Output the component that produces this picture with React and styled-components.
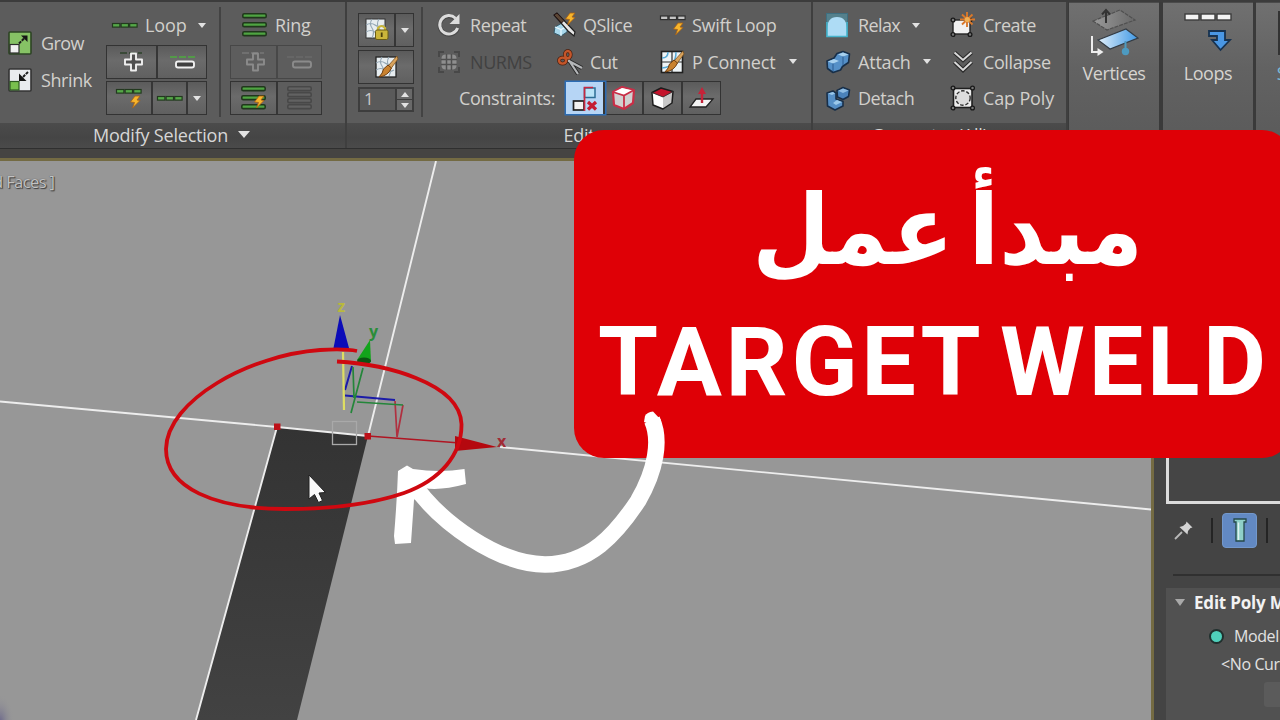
import React from "react";
import styled, { createGlobalStyle } from "styled-components";

const Global = createGlobalStyle`
  * { box-sizing: border-box; }
  body { margin: 0; background: #444; font-family: "Open Sans", "Noto Sans", sans-serif; overflow: hidden; }
  svg { display: block; flex: none; overflow: visible; }
`;

const Screen = styled.div`
  position: relative;
  width: 1280px;
  height: 720px;
  overflow: hidden;
  background: #444;
  display: flex;
  flex-direction: column;
`;

/* ---------- ribbon ---------- */
const Ribbon = styled.header`
  height: 149px;
  flex: none;
  display: flex;
  background: #3a3a3a;
  border-top: 2px solid #3c3c3c;
  border-bottom: 1px solid #2f2f2f;
`;
const Panel = styled.section`
  width: ${(p) => p.$w}px;
  flex: none;
  display: flex;
  flex-direction: column;
  background: #5c5c5c;
  border-right: 2px solid #3f3f3f;
`;
const PanelBody = styled.div`
  height: 121px;
  display: flex;
  padding: 5px 0 0 ${(p) => p.$left}px;
`;
const PanelTitle = styled.div`
  height: 25px;
  display: flex;
  align-items: center;
  justify-content: center;
  gap: 10px;
  padding: 0 ${(p) => p.$shift || 0}px 2px 0;
  background: linear-gradient(#4b4b4b, #454545 60%, #4a4a4a);
  color: #d6d6d6;
  font-size: 18px;
  letter-spacing: -0.2px;
  line-height: 22px;
  white-space: nowrap;
`;
const Column = styled.div`
  width: ${(p) => p.$w}px;
  flex: none;
  padding-top: ${(p) => p.$top || 0}px;
`;
const StackColumn = styled(Column)`
  display: flex;
  flex-direction: column;
  align-items: flex-start;
  gap: 3px;
`;
const Row = styled.div`
  height: 36.5px;
  display: flex;
  align-items: center;
  padding-left: ${(p) => p.$in || 0}px;
`;
const Label = styled.span`
  margin-left: ${(p) => (p.$gap === undefined ? 9 : p.$gap)}px;
  color: ${(p) => (p.$off ? "#414141" : "#d2d0cc")};
  font-size: 18px;
  line-height: 24px;
  letter-spacing: ${(p) => (p.$ls === undefined ? -0.4 : p.$ls)}px;
  white-space: nowrap;
`;
const Divider = styled.div`
  width: 2px;
  height: 110px;
  flex: none;
  margin-right: ${(p) => p.$r}px;
  background: #434343;
`;
const Caret = styled.i`
  width: 0;
  height: 0;
  flex: none;
  margin-left: ${(p) => p.$gap || 0}px;
  border: ${(p) => p.$s || 4}px solid transparent;
  border-top: ${(p) => (p.$s || 4) + 1}px solid #e2e2e2;
  border-bottom: 0;
`;
const ButtonGroup = styled.div`
  display: flex;
  border: 1px solid ${(p) => (p.$off ? "#474747" : "#333")};
  height: 34px;
`;
const ToolButton = styled.button`
  width: ${(p) => p.$w}px;
  flex: none;
  padding: 0;
  border: 0;
  border-right: ${(p) => (p.$last ? 0 : 2)}px solid ${(p) => (p.$off ? "#484848" : "#363636")};
  display: flex;
  align-items: center;
  justify-content: center;
  background: ${(p) =>
    p.$on ? "#b6d5f5" : p.$off ? "#5d5d5d" : "linear-gradient(#5b5b5b, #6b6b6b 45%, #606060)"};
  box-shadow: ${(p) => (p.$on ? "0 0 0 1.500px #2c6cb3" : "none")};
  z-index: ${(p) => (p.$on ? 1 : 0)};
`;
const Spinner = styled.div`
  width: 56px;
  height: 25px;
  display: flex;
  border: 2px solid #3d3d3d;
  background: #5a5a5a;
  color: #c9c9c9;
  font-size: 17px;
  line-height: 20px;
  padding-left: 4px;
  justify-content: space-between;
`;
const SpinArrows = styled.div`
  width: 17px;
  display: flex;
  flex-direction: column;
  border-left: 2px solid #3d3d3d;
`;
const Spin = styled.div`
  flex: 1;
  display: flex;
  align-items: center;
  justify-content: center;
  background: #696969;
  & + & { border-top: 1px solid #3d3d3d; }
`;
const CaretUp = styled.i`
  border: 4px solid transparent;
  border-bottom: 5px solid #e2e2e2;
  border-top: 0;
`;
const BigButton = styled.div`
  width: 90px;
  height: 147px;
  flex: none;
  margin-left: ${(p) => p.$gap}px;
  padding-top: 5px;
  display: flex;
  flex-direction: column;
  align-items: center;
  background: linear-gradient(#707070, #626262 45%, #5a5a5a);
  border-top: 1px solid #4b4b4b;
  color: ${(p) => p.$c || "#d6d4d0"};
  font-size: 18px;
  line-height: 24px;
  letter-spacing: -0.45px;
  & > svg { margin-bottom: 4px; }
`;

/* ---------- workspace ---------- */
const Gutter = styled.div`
  height: 9px;
  flex: none;
  background: #454442;
`;
const Work = styled.main`
  flex: 1;
  display: flex;
  min-height: 0;
`;
const Viewport = styled.div`
  position: relative;
  width: 1154px;
  flex: none;
  border-top: 3px solid #746b43;
  border-right: 3px solid #746b43;
  background: #979797;
  overflow: hidden;
`;
const ViewTag = styled.div`
  margin: 10px 0 0 -7px;
  font: 16.500px/22px "Open Sans", sans-serif;
  letter-spacing: -0.6px;
  color: #c2c2c2;
  text-shadow: 1px 1px 1px #3c3c3c, 0 0 1px #444;
  white-space: pre;
`;
const Scene = styled.svg`
  position: absolute;
  left: 0;
  top: -161px;
`;
const Side = styled.aside`
  flex: 1;
  min-width: 0;
  padding-left: 12px;
  background: #444;
  overflow: hidden;
`;
const StackBox = styled.div`
  height: 346px;
  width: 160px;
  border: 3px solid #dcdcdc;
  border-right: 0;
  background: #454545;
`;
const StackTools = styled.div`
  display: flex;
  align-items: center;
  width: 160px;
  height: 36px;
  margin-top: 8px;
  padding-left: 8px;
`;
const Bar = styled.div`
  width: 2px;
  height: 25px;
  flex: none;
  margin: 0 ${(p) => p.$r}px 0 ${(p) => p.$l}px;
  background: #242424;
`;
const StackButton = styled.div`
  width: 35px;
  height: 35px;
  flex: none;
  display: flex;
  align-items: center;
  justify-content: center;
  border-radius: 4px;
  background: #6289c3;
  border: 1px solid #7398cb;
`;
const Rule = styled.div`
  height: 2px;
  width: 140px;
  margin: 26px 0 12px 7px;
  background: #303030;
`;
const Rollout = styled.div`
  width: 160px;
  height: 140px;
  background: #515151;
  color: #e2e2e2;
  font-size: 16px;
  letter-spacing: -0.4px;
  white-space: nowrap;
`;
const RollTitle = styled.div`
  height: 30px;
  display: flex;
  align-items: center;
  padding: 0 0 2px 9px;
  gap: 9px;
  font-weight: 700;
  font-size: 17px;
  letter-spacing: -0.2px;
  color: #f2f2f2;
`;
const RollCaret = styled(Caret)`
  border-top-color: #a9a9a9;
  border-top-width: 7px;
  border-left-width: 5px;
  border-right-width: 5px;
`;
const RadioRow = styled.div`
  height: 36px;
  display: flex;
  align-items: center;
  padding-left: 43px;
  gap: 10px;
`;
const Radio = styled.i`
  width: 15px;
  height: 15px;
  border-radius: 50%;
  background: #4fd0bb;
  border: 2px solid #20302e;
`;
const RollText = styled.div`
  padding-left: 55px;
  line-height: 20px;
`;
const RollField = styled.div`
  margin: 8px 0 0 98px;
  height: 25px;
  border-radius: 3px;
  background: #5b5b5b;
`;

/* ---------- overlay ---------- */
const Card = styled.div`
  position: absolute;
  left: 574px;
  top: 130px;
  width: 718px;
  height: 328px;
  border-radius: 30px;
  background: #df0006;
  color: #fff;
  white-space: nowrap;
`;
const Arabic = styled.div`
  height: 190px;
  padding: 30px 154px 0 0;
  direction: rtl;
  font: 700 98px/140px "DejaVu Sans", sans-serif;
  word-spacing: -18px;
  transform: translateX(-8px) scaleX(0.915);
  transform-origin: 100% 0;
`;
const Headline = styled.div`
  padding-left: 24px;
  font: 700 97px/84px Roboto, "Liberation Sans", sans-serif;
  letter-spacing: 3.7px;
  word-spacing: -9.500px;
`;
const Marks = styled.svg`
  position: absolute;
  left: 0;
  top: 0;
`;

/* ---------- icons ---------- */
const Dashes = ({ x = 0, y = 0, c = "#55a848", d = "#23391f" }) => (
  <g>
    {[0, 8.6, 17.2].map((o) => (
      <rect key={o} x={x + o + 0.5} y={y + 0.5} width="7.4" height="3.6" fill={c} stroke={d} strokeWidth="1.2" />
    ))}
  </g>
);
const Bars = ({ c = "#4fa542", d = "#20371c", y = [0, 9, 18] }) => (
  <g>
    {y.map((o) => (
      <rect key={o} x="0.8" y={o + 0.8} width="23.4" height="3.8" rx="1.4" fill={c} stroke={d} strokeWidth="1.6" />
    ))}
  </g>
);
const Svg = ({ w = 24, h = 24, children }) => (
  <svg width={w} height={h} viewBox={`0 0 ${w} ${h}`} fill="none">
    {children}
  </svg>
);
const Bolt = ({ x, y }) => (
  <path
    transform={`translate(${x} ${y})`}
    d="M5 0 L10 0 L7 4 L10 4.5 L2.5 12 L4.5 6.5 L0.5 6Z"
    fill="#f6b52c"
    stroke="#a85f14"
    strokeWidth="0.8"
  />
);
const GrowIcon = () => (
  <Svg>
    <rect x="1" y="1" width="22" height="22" rx="1" fill="#86c265" stroke="#2d4424" strokeWidth="1.6" />
    <rect x="2" y="13.5" width="9" height="8.5" fill="#f0f0f0" stroke="#2c2c2c" strokeWidth="1.2" />
    <path d="M11 12.5 L17.5 6" stroke="#1c1c1c" strokeWidth="2" strokeDasharray="3 1" />
    <path d="M13 4.5 H19.5 V11Z" fill="#151515" />
  </Svg>
);
const ShrinkIcon = () => (
  <Svg>
    <rect x="1" y="1" width="22" height="22" rx="1" fill="#e9ebee" stroke="#333" strokeWidth="1.6" />
    <rect x="2" y="13.5" width="9" height="8.5" fill="#79c04e" stroke="#2d5a21" strokeWidth="1.2" />
    <path d="M20 4 L14 10" stroke="#1c1c1c" strokeWidth="2" strokeDasharray="3 1" />
    <path d="M11 5.5 V13 H18.5Z" fill="#151515" />
  </Svg>
);
const plusPath = "M7 1 H12 V7 H18 V12 H12 V18 H7 V12 H1 V7 H7Z";
const PlusIcon = ({ off }) => (
  <Svg w={25} h={22}>
    <path d="M1 2 H23" stroke={off ? "#707070" : "#3a4a38"} strokeWidth="2" strokeDasharray="7 2" />
    <path transform="translate(5 1.5)" d={plusPath} fill={off ? "#606060" : "#505050"} stroke={off ? "#8b8b8b" : "#f0f0f0"} strokeWidth="1.9" strokeLinejoin="round" />
  </Svg>
);
const MinusIcon = ({ off }) => (
  <Svg w={25} h={22}>
    <path d="M0 6 H25" stroke={off ? "#666" : "#539a48"} strokeWidth="1.8" strokeDasharray="7 2" />
    <rect x="6" y="10.5" width="18" height="6" rx="2" fill={off ? "#606060" : "#404040"} stroke={off ? "#8b8b8b" : "#f0f0f0"} strokeWidth="1.9" />
  </Svg>
);
const mesh = (
  <path d="M2 8 Q7 5 11 8 T20 8 M2 15 Q7 12 11 15 T20 15 M8 2 Q5 7 8 11 T8 21 M15 2 Q12 7 15 11 T15 21" stroke="#93a6b3" strokeWidth="1.1" />
);
const MeshLock = () => (
  <Svg w={26} h={26}>
    <rect x="2" y="2" width="19" height="19" fill="#e7edf0" stroke="#333" />
    {mesh}
    <path d="M14 14 V11 Q17.5 7 21 11 V14" stroke="#c9b63a" strokeWidth="2.2" />
    <rect x="11.5" y="13" width="12.5" height="9.5" rx="1.5" fill="#cbb53a" stroke="#6a5d15" />
    <path d="M17.7 15.5 V20" stroke="#4b410d" strokeWidth="1.8" />
  </Svg>
);
const Brush = () => (
  <>
    <path d="M23 1 L14 11 L17 13.5 L24 4Z" fill="#d9a35c" stroke="#78501f" strokeWidth="0.8" />
    <path d="M14 10 L17.5 13 Q14 21 5 22 Q9 18 9.500 14Z" fill="#c9822f" stroke="#6e3e10" />
  </>
);
const MeshBrush = () => (
  <Svg>
    <rect x="2" y="2" width="20" height="20" fill="#e7edf0" stroke="#222" strokeWidth="1.3" />
    {mesh}
    <Brush />
  </Svg>
);
const RepeatIcon = () => (
  <Svg>
    <path d="M18.500 5.800 A9.2 9.2 0 1 0 20.6 15.5" stroke="#333" strokeWidth="4.400" opacity="0.5" />
    <path d="M18.500 5.300 A9.2 9.2 0 1 0 20.6 15" stroke="#dcdcdc" strokeWidth="3" />
    <path d="M22.5 1 V11 H12.5Z" fill="#dcdcdc" />
  </Svg>
);
const NurmsIcon = () => (
  <Svg>
    <path d="M2 7 V2 H7 M17 2 H22 V7 M22 17 V22 H17 M7 22 H2 V17" stroke="#484848" strokeWidth="2" />
    <rect x="4.500" y="4.500" width="15" height="15" rx="4" fill="#8e8e8e" />
    <path d="M9.5 4 V20 M14.5 4 V20 M4 9.5 H20 M4 14.5 H20" stroke="#505050" strokeWidth="1.5" />
  </Svg>
);
const QSliceIcon = () => (
  <Svg w={25} h={26}>
    <path d="M3 15 L10 11 L16 14 L15 20 L9 24 L2 21Z" fill="#a9d8ec" stroke="#35596a" />
    <path d="M3 15 L9 17.5 L16 14 M9 17.5 V24" stroke="#e9f8ff" strokeWidth="1.2" />
    <path d="M2 3 L5 1 L23 20 L22 24 L16 19Z" fill="#e6e6e6" stroke="#222" strokeWidth="1.2" />
    <path d="M2 3 L5 1 L12 8.5 L9.5 11Z" fill="#5b4635" stroke="#211" />
    <Bolt x={13} y={1} />
  </Svg>
);
const CutIcon = () => (
  <Svg w={26}>
    <path d="M9 10 L24 18 M10 9 L20 24" stroke="#282828" strokeWidth="4" />
    <path d="M9 10 L24 18 M10 9 L20 24" stroke="#b4b6b8" strokeWidth="2.2" />
    <ellipse cx="4.6" cy="10.6" rx="3.6" ry="3" stroke="#4a2010" strokeWidth="3.800" />
    <ellipse cx="9.8" cy="4.6" rx="2.9" ry="3.6" stroke="#4a2010" strokeWidth="3.800" />
    <ellipse cx="4.6" cy="10.6" rx="3.6" ry="3" stroke="#c4562a" strokeWidth="2.4" />
    <ellipse cx="9.8" cy="4.6" rx="2.9" ry="3.6" stroke="#c4562a" strokeWidth="2.4" />
  </Svg>
);
const SwiftIcon = () => (
  <Svg w={25} h={24}>
    <Dashes y={2.5} c="#c5c5c5" d="#2f2f2f" />
    <Bolt x={13} y={10} />
  </Svg>
);
const PConnectIcon = () => (
  <Svg>
    <rect x="1.5" y="1.5" width="21" height="21" fill="#eef4f7" stroke="#1f1f1f" strokeWidth="1.6" />
    <path d="M12 2 V22 M2 12 H22" stroke="#2d2d2d" strokeWidth="1.2" />
    <path d="M2 8 Q8 8 8 2 M2 18 Q16 17 16 2" stroke="#58a9d4" strokeWidth="1.5" />
    <Brush />
  </Svg>
);
const NoneIcon = () => (
  <Svg w={26} h={28}>
    <rect x="12.500" y="4" width="10.500" height="9.500" fill="#b9e3f7" stroke="#2d6d94" strokeWidth="1.5" />
    <rect x="1.5" y="17" width="10.5" height="9" fill="#f2f2f2" stroke="#202020" strokeWidth="1.7" />
    <path d="M21 3.500 H12.500 V27" stroke="#c62841" strokeWidth="1.7" />
    <path d="M16 18 L24 25.500 M24 18 L16 25.500" stroke="#c41c33" strokeWidth="3.2" />
  </Svg>
);
const cube = ["M2 7 L11 2 L23 5 L22 18 L13 24 L3 20Z", "M2 7 L13 10.5 L23 5 M13 10.5 V24"];
const EdgeIcon = () => (
  <Svg w={25} h={26}>
    <path d={cube[0]} fill="#d0d0d0" stroke="#c92e47" strokeWidth="2.2" strokeLinejoin="round" />
    <path d="M3 7 L11 3 L22 5.5 L13 10Z" fill="#fff" />
    <path d={cube[1]} stroke="#c92e47" strokeWidth="1.8" />
  </Svg>
);
const FaceIcon = () => (
  <Svg w={25} h={26}>
    <path d="M2 8 L13 12 V24 L3 20Z" fill="#fff" />
    <path d="M23 7 L13 12 V24 L22 18Z" fill="#c9c9c9" />
    <path d="M2 7.5 L11 3 L23 6.5 L13 12Z" fill="#c4142c" />
    <path d="M2 7.5 L11 3 L23 6.5 L22 18 L13 24 L3 20Z" stroke="#1c1c1c" strokeWidth="1.5" strokeLinejoin="round" />
    <path d="M2 7.5 L13 12 L23 6.5" stroke="#303030" strokeWidth="0.8" />
  </Svg>
);
const NormalIcon = () => (
  <Svg w={25} h={26}>
    <path d="M7 14 H24 L17 22 H1Z" fill="#f4f4f4" stroke="#222" strokeWidth="1.3" />
    <path d="M13 18 V7" stroke="#c52339" strokeWidth="2.4" />
    <path d="M13 2 L17 9 H9Z" fill="#c52339" />
  </Svg>
);
const RelaxIcon = () => (
  <Svg w={24} h={26}>
    <rect x="1.5" y="1.5" width="21" height="23" fill="#54808c" stroke="#3e6f80" />
    <path d="M2 24.5 V18 Q2 5 12 5 T22 18 V24.5Z" fill="#aedcf5" />
    <path d="M2 10 V24.5 H22 V10" stroke="#46b4cc" strokeWidth="1.6" />
  </Svg>
);
const AttachIcon = () => (
  <Svg w={26} h={24}>
    <path d="M2 11 L9 8 L12 3.5 L18 1.5 L24.5 4 L23.5 12.5 L17.5 16.5 L15.5 20 L8 22.5 L2.5 18.5Z" fill="#5590c8" stroke="#182f49" strokeWidth="1.6" strokeLinejoin="round" />
    <path d="M2.8 11.5 L9 9 L14 11 L8 13.5Z M13 4.5 L18 2.5 L23.5 4.5 L18 6.5Z" fill="#a8d1ef" />
    <path d="M8 13.5 V21 M18 6.5 V15" stroke="#2d5d92" />
  </Svg>
);
const DetachIcon = () => (
  <Svg w={26} h={25}>
    <path d="M2 7 L8 5 L11 7 V13 L18 15.5 V20 L10 24 L2.5 20Z" fill="#568fc6" stroke="#182f49" strokeWidth="1.6" strokeLinejoin="round" />
    <path d="M3 7.5 L8 6 L10 7.5 L7 9Z M8 17 L12 14 L17 16 L11 19Z" fill="#9bc8ea" />
    <path d="M12 4.5 L18 1.5 L24.5 4 L23.5 10.5 L18 13.5 L12.5 11Z" fill="#4a82ba" stroke="#182f49" strokeWidth="1.6" strokeLinejoin="round" />
    <path d="M13 4.8 L18 2.5 L23.5 4.5 L18 7Z" fill="#8ebce2" />
  </Svg>
);
const corners = (a, b, c, d) => [[a, b], [c, b], [a, d], [c, d]].map(([x, y]) => (
  <circle key={x + "," + y} cx={x} cy={y} r="1.9" fill="#777" stroke="#181818" strokeWidth="1.3" />
));
const CreateIcon = () => (
  <Svg w={26} h={26}>
    <rect x="3" y="8" width="17" height="14" fill="#f1f1f1" stroke="#242424" strokeWidth="1.4" />
    {corners(3, 8, 20, 22.5)}
    <path d="M17 0 V15 M10 7.5 H25 M12 2.5 L22.5 12.5 M22.5 2.5 L12 12.5" stroke="#d9782a" strokeWidth="1.9" />
    <circle cx="17.3" cy="7.5" r="2.600" fill="#f0b055" />
  </Svg>
);
const CollapseIcon = () => (
  <Svg w={26} h={24}>
    <path d="M4.5 2.5 L13 10 L21.5 2.5 M4.5 12 L13 20 L21.5 12" stroke="#292929" strokeWidth="4.2" />
    <path d="M4.5 2.5 L13 10 L21.5 2.5 M4.5 12 L13 20 L21.5 12" stroke="#d8d8d8" strokeWidth="2" />
  </Svg>
);
const CapIcon = () => (
  <Svg w={26} h={26}>
    <rect x="3.5" y="3.5" width="18.5" height="19" fill="#ededed" stroke="#1f1f1f" strokeWidth="1.6" />
    <circle cx="13" cy="13" r="7.2" fill="#ddd" stroke="#303030" strokeWidth="1.4" strokeDasharray="3.5 1.8" />
    {corners(3, 3, 22.5, 23)}
  </Svg>
);
const VerticesIcon = () => (
  <svg width="50" height="49" viewBox="0 0 50 49" fill="none">
    <defs>
      <linearGradient id="va" x1="0" x2="1"><stop stopColor="#9a9a9a" /><stop offset="1" stopColor="#686868" /></linearGradient>
      <linearGradient id="vb" x1="0" x2="1"><stop stopColor="#e2f0fb" /><stop offset="1" stopColor="#3f98e4" /></linearGradient>
    </defs>
    <path d="M4 13 L31 2 L46 12 L18 22Z" fill="url(#va)" stroke="#505050" strokeWidth="1.2" strokeDasharray="4 1" />
    <path d="M17 15 V4 M13 6.5 L17 2 L21 6.5" stroke="#333" strokeWidth="2" />
    <path d="M9 32 L37 21 L49 30 L21 41Z" fill="url(#vb)" stroke="#343c44" strokeWidth="1.2" />
    <path d="M3 28 V44 H10" stroke="#eee" strokeWidth="2" />
    <path d="M8.500 40 L14.500 44 L8.500 48Z" fill="#eee" />
    <path d="M36.500 33 V42" stroke="#4d9ac0" strokeWidth="2" />
    <circle cx="36.500" cy="43.500" r="3.700" fill="#4d9ac0" />
  </svg>
);
const LoopsIcon = () => (
  <svg width="48" height="49" viewBox="0 0 48 49" fill="none">
    {[1, 17, 33].map((x) => <rect key={x} x={x} y="6" width="14" height="6" fill="#f4f4f4" stroke="#3c3c3c" strokeWidth="1.4" />)}
    <path d="M25 23 H41 V32 H46 L36.500 42 L28 32 H33 V28 H25Z" fill="#4a97e4" stroke="#173250" strokeWidth="1.800" />
  </svg>
);
const BoxIcon = () => (
  <svg width="46" height="49" viewBox="0 0 46 49"><rect x="1" y="4" width="44" height="42" fill="#4b4b4b" stroke="#333" strokeWidth="2" /></svg>
);
const PinIcon = () => (
  <Svg w={20} h={20}>
    <path d="M1 19 L8 12" stroke="#b9b9b9" strokeWidth="1.800" />
    <path d="M12.500 1.500 L18.500 7.500 L16.500 8 L14 11 L13.500 14.500 L5.500 7 L9 6 L12 3.500Z" fill="#d3d3d3" />
  </Svg>
);
const TubeIcon = () => (
  <Svg w={14} h={24}>
    <path d="M1 1 H13 V4 H11 V23 H3 V4 H1Z" fill="#8fd0c8" stroke="#26484a" strokeWidth="1.300" />
    <path d="M5.500 4.500 V22" stroke="#dff3f0" strokeWidth="1.500" />
  </Svg>
);

const SceneDrawing = () => (
  <Scene width="1151" height="720" viewBox="0 0 1151 720" fill="none">
    <defs>
      <linearGradient id="strip" x1="0" y1="427" x2="0" y2="720" gradientUnits="userSpaceOnUse">
        <stop stopColor="#333" /><stop offset="1" stopColor="#424242" />
      </linearGradient>
      <radialGradient id="glow"><stop stopColor="#5f5a88" /><stop offset="1" stopColor="#979797" stopOpacity="0" /></radialGradient>
    </defs>
    <ellipse cx="0" cy="722" rx="14" ry="28" fill="url(#glow)" opacity="0.8" />
    <path d="M277 427 L368 436 L297 720 H196Z" fill="url(#strip)" />
    <path d="M0 401.500 L277 427 L368 436 M500 447 L1151 509.500 M436 161 L368 436 M277 427 L196 720" stroke="#ededed" strokeWidth="1.900" />
    <rect x="332.500" y="421.500" width="24" height="23" stroke="#a9a9a9" strokeWidth="1.300" />
    <path d="M368 436 L460 443" stroke="#b01522" strokeWidth="1.700" />
    <path d="M455 436 L497 447 L455 451Z" fill="#b5080f" />
    <path d="M395 401 L397 437 L403 405" stroke="#b03040" strokeWidth="1.700" />
    <path d="M345 390 L352 366 M345 395.500 L395 400" stroke="#1b1ba8" strokeWidth="2" />
    <path d="M351 413 L363 368 M353 367 L354 398 M357 402 L403 405" stroke="#24863a" strokeWidth="1.700" />
    <path d="M343 352 L344 410" stroke="#dede62" strokeWidth="2.200" />
    <path d="M340 315 L349 348 Q341 354 333.500 348Z" fill="#0b0bb8" />
    <path d="M370 340 L371 362 L357 360Z" fill="#12a41b" />
    <ellipse cx="364" cy="361" rx="7" ry="3.500" fill="#0b5512" />
    <g fontFamily="Open Sans, sans-serif" fontWeight="700" fontSize="16">
      <text x="337.500" y="311.500" fill="#b9b93c">z</text>
      <text x="369" y="337" fill="#2b8d39">y</text>
      <text x="497" y="447" fill="#a12b35">x</text>
    </g>
    <path d="M274 423.500 h6.500 v6.500 h-6.500Z M364.500 433 h6.500 v6.500 h-6.500Z" fill="#bd1018" />
    <path d="M309 475 V499 L314.500 494.500 L318.500 502.500 L322.500 500.500 L319 493 L325.500 492.500Z" fill="#fafafa" stroke="#202020" strokeWidth="1" />
  </Scene>
);

export default function App() {
  return (
    <Screen>
      <Global />
      <Ribbon>
        <Panel $w={347}>
          <PanelBody $left={8}>
            <Column $w={98} $top={18}>
              <Row><GrowIcon /><Label $ls={-0.6}>Grow</Label></Row>
              <Row><ShrinkIcon /><Label>Shrink</Label></Row>
            </Column>
            <Column $w={113}>
              <Row $in={6}>
                <Svg w={25} h={5}><Dashes /></Svg><Label $gap={8} $ls={-0.1}>Loop</Label><Caret $gap={11} />
              </Row>
              <Row>
                <ButtonGroup>
                  <ToolButton $w={51}><PlusIcon /></ToolButton>
                  <ToolButton $w={48} $last><MinusIcon /></ToolButton>
                </ButtonGroup>
              </Row>
              <Row>
                <ButtonGroup>
                  <ToolButton $w={46}><Svg w={26}><Dashes y={3} /><Bolt x={14} y={10} /></Svg></ToolButton>
                  <ToolButton $w={35}><Svg w={25} h={5}><Dashes /></Svg></ToolButton>
                  <ToolButton $w={18} $last><Caret /></ToolButton>
                </ButtonGroup>
              </Row>
            </Column>
            <Divider $r={9} />
            <Column $w={94}>
              <Row $in={12}>
                <Svg w={25} h={24}><Bars /></Svg><Label $gap={8} $ls={-0.2}>Ring</Label>
              </Row>
              <Row>
                <ButtonGroup $off>
                  <ToolButton $w={47} $off><PlusIcon off /></ToolButton>
                  <ToolButton $w={43} $off $last><MinusIcon off /></ToolButton>
                </ButtonGroup>
              </Row>
              <Row>
                <ButtonGroup>
                  <ToolButton $w={47}><Svg w={25} h={24}><Bars /><Bolt x={13} y={10} /></Svg></ToolButton>
                  <ToolButton $w={43} $off $last><Svg w={25} h={24}><Bars c="#626262" d="#484848" y={[0, 6, 12, 18]} /></Svg></ToolButton>
                </ButtonGroup>
              </Row>
            </Column>
          </PanelBody>
          <PanelTitle $shift={2}>Modify Selection<Caret $s={6} /></PanelTitle>
        </Panel>

        <Panel $w={466}>
          <PanelBody $left={11}>
            <StackColumn $w={63} $top={6}>
              <ButtonGroup>
                <ToolButton $w={37}><MeshLock /></ToolButton>
                <ToolButton $w={17} $last><Caret /></ToolButton>
              </ButtonGroup>
              <ButtonGroup><ToolButton $w={54} $last><MeshBrush /></ToolButton></ButtonGroup>
              <Spinner>1
                <SpinArrows><Spin><CaretUp /></Spin><Spin><Caret /></Spin></SpinArrows>
              </Spinner>
            </StackColumn>
            <Divider $r={14} />
            <div>
              <Row>
                <Column $w={115}><Row><RepeatIcon /><Label>Repeat</Label></Row></Column>
                <Column $w={108}><Row><QSliceIcon /><Label $gap={6}>QSlice</Label></Row></Column>
                <SwiftIcon /><Label $gap={7} $ls={-0.3}>Swift Loop</Label>
              </Row>
              <Row>
                <Column $w={121}><Row><NurmsIcon /><Label $off>NURMS</Label></Row></Column>
                <Column $w={102}><Row><CutIcon /><Label $gap={6}>Cut</Label></Row></Column>
                <PConnectIcon /><Label $gap={8} $ls={-0.15}>P Connect</Label><Caret $gap={13} />
              </Row>
              <Row $in={22}>
                <Column $w={106}><Label $gap={0}>Constraints:</Label></Column>
                <ButtonGroup>
                  <ToolButton $w={39} $on><NoneIcon /></ToolButton>
                  <ToolButton $w={39}><EdgeIcon /></ToolButton>
                  <ToolButton $w={39}><FaceIcon /></ToolButton>
                  <ToolButton $w={37} $last><NormalIcon /></ToolButton>
                </ButtonGroup>
              </Row>
            </div>
          </PanelBody>
          <PanelTitle>Edit</PanelTitle>
        </Panel>

        <Panel $w={255}>
          <PanelBody $left={12}>
            <Column $w={125}>
              <Row><RelaxIcon /><Label $ls={-0.6}>Relax</Label><Caret $gap={12} /></Row>
              <Row><AttachIcon /><Label $gap={7} $ls={-0.2}>Attach</Label><Caret $gap={12} /></Row>
              <Row><DetachIcon /><Label $gap={7} $ls={-0.5}>Detach</Label></Row>
            </Column>
            <div>
              <Row><CreateIcon /><Label $gap={7}>Create</Label></Row>
              <Row><CollapseIcon /><Label $gap={7}>Collapse</Label></Row>
              <Row><CapIcon /><Label $gap={7} $ls={-0.15}>Cap Poly</Label></Row>
            </div>
          </PanelBody>
          <PanelTitle $shift={20}>Geometry (All)</PanelTitle>
        </Panel>

        <BigButton $gap={1}><VerticesIcon />Vertices</BigButton>
        <BigButton $gap={4}><LoopsIcon />Loops</BigButton>
        <BigButton $gap={3} $c="#79b8d8"><BoxIcon />Spline</BigButton>
      </Ribbon>
      <Gutter />
      <Work>
        <Viewport>
          <ViewTag>d Faces ]</ViewTag>
          <SceneDrawing />
        </Viewport>
        <Side>
          <StackBox />
          <StackTools>
            <PinIcon /><Bar $l={17} $r={9} /><StackButton><TubeIcon /></StackButton><Bar $l={9} $r={0} />
          </StackTools>
          <Rule />
          <Rollout>
            <RollTitle><RollCaret />Edit Poly Mode</RollTitle>
            <RadioRow><Radio />Model</RadioRow>
            <RollText>&lt;No Current</RollText>
            <RollField />
          </Rollout>
        </Side>
      </Work>

      <Card>
        <Arabic>مبدأ عمل</Arabic>
        <Headline>TARGET WELD</Headline>
      </Card>
      <Marks width="1280" height="720" viewBox="0 0 1280 720" fill="none">
        <path d="M652 420 C661 440 656 470 638 501 C616 534 590 564 545 564.500 C500 564 440 525 409 478" stroke="#fff" strokeWidth="16.500" />
        <path d="M644 422 L645 416 Q647 412 653 411.500 L661 420 L652 425Z" fill="#fff" />
        <path d="M398 471 L407 465.500 L413 469 Q440 473 464.500 469 L466 484 Q440 491 424 488 L414 500 L411 543 L395 544 L394 536 Q397 500 398 471Z" fill="#fff" />
        <path d="M357 351 Q345 348.500 320 350 C250 355 167 400 166 449 C166 488 215 509 285 509 C335 509 375 503 404 493 C440 480 462 455 461.500 424 C460 382 383 364 337 361.500" stroke="#cf0810" strokeWidth="3.800" />
      </Marks>
    </Screen>
  );
}
